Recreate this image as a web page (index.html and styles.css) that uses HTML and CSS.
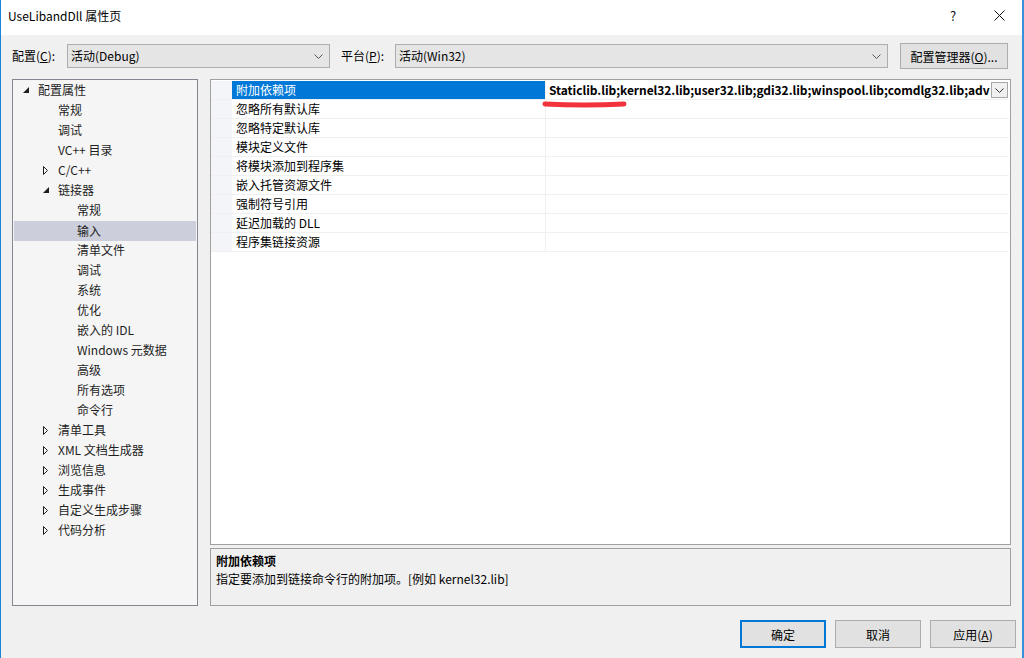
FILE: index.html
```html
<!DOCTYPE html>
<html lang="zh-CN">
<head>
<meta charset="utf-8">
<title>UseLibandDll 属性页</title>
<link rel="stylesheet" href="styles.css">
</head>
<body>
<div class="window">
  <div class="titlebar">
    <span class="title">UseLibandDll 属性页</span>
    <span class="help">?</span>
    <span class="close"><svg width="11" height="11" viewBox="0 0 11 11"><path d="M0.5 0.5 L10.5 10.5 M10.5 0.5 L0.5 10.5" stroke="#111" stroke-width="1" fill="none"/></svg></span>
  </div>

  <div class="config-row">
    <span class="lbl lbl-cfg">配置(<u>C</u>):</span>
    <div class="combo combo-cfg"><span>活动(Debug)</span><svg class="chev" width="9" height="5" viewBox="0 0 9 5"><path d="M0.5 0.5 L4.5 4.5 L8.5 0.5" stroke="#555" fill="none"/></svg></div>
    <span class="lbl lbl-plat">平台(<u>P</u>):</span>
    <div class="combo combo-plat"><span>活动(Win32)</span><svg class="chev" width="9" height="5" viewBox="0 0 9 5"><path d="M0.5 0.5 L4.5 4.5 L8.5 0.5" stroke="#555" fill="none"/></svg></div>
    <div class="btn btn-mgr">配置管理器(<u>O</u>)...</div>
  </div>

  <div class="main">
    <div class="tree">
      <div class="ti l0"><span class="arr"><svg width="6" height="6" viewBox="0 0 6 6"><path d="M6 0 L6 6 L0 6 Z" fill="#1e1e1e"/></svg></span>配置属性</div>
      <div class="ti l1"><span class="arr"></span>常规</div>
      <div class="ti l1"><span class="arr"></span>调试</div>
      <div class="ti l1"><span class="arr"></span>VC++ 目录</div>
      <div class="ti l1"><span class="arr"><svg width="5" height="9" viewBox="0 0 5 9"><path d="M0.5 0.5 L4.5 4.5 L0.5 8.5 Z" stroke="#1e1e1e" fill="none"/></svg></span>C/C++</div>
      <div class="ti l1"><span class="arr"><svg width="6" height="6" viewBox="0 0 6 6"><path d="M6 0 L6 6 L0 6 Z" fill="#1e1e1e"/></svg></span>链接器</div>
      <div class="ti l2"><span class="arr"></span>常规</div>
      <div class="ti l2 sel"><span class="arr"></span>输入</div>
      <div class="ti l2"><span class="arr"></span>清单文件</div>
      <div class="ti l2"><span class="arr"></span>调试</div>
      <div class="ti l2"><span class="arr"></span>系统</div>
      <div class="ti l2"><span class="arr"></span>优化</div>
      <div class="ti l2"><span class="arr"></span>嵌入的 IDL</div>
      <div class="ti l2"><span class="arr"></span>Windows 元数据</div>
      <div class="ti l2"><span class="arr"></span>高级</div>
      <div class="ti l2"><span class="arr"></span>所有选项</div>
      <div class="ti l2"><span class="arr"></span>命令行</div>
      <div class="ti l1"><span class="arr"><svg width="5" height="9" viewBox="0 0 5 9"><path d="M0.5 0.5 L4.5 4.5 L0.5 8.5 Z" stroke="#1e1e1e" fill="none"/></svg></span>清单工具</div>
      <div class="ti l1"><span class="arr"><svg width="5" height="9" viewBox="0 0 5 9"><path d="M0.5 0.5 L4.5 4.5 L0.5 8.5 Z" stroke="#1e1e1e" fill="none"/></svg></span>XML 文档生成器</div>
      <div class="ti l1"><span class="arr"><svg width="5" height="9" viewBox="0 0 5 9"><path d="M0.5 0.5 L4.5 4.5 L0.5 8.5 Z" stroke="#1e1e1e" fill="none"/></svg></span>浏览信息</div>
      <div class="ti l1"><span class="arr"><svg width="5" height="9" viewBox="0 0 5 9"><path d="M0.5 0.5 L4.5 4.5 L0.5 8.5 Z" stroke="#1e1e1e" fill="none"/></svg></span>生成事件</div>
      <div class="ti l1"><span class="arr"><svg width="5" height="9" viewBox="0 0 5 9"><path d="M0.5 0.5 L4.5 4.5 L0.5 8.5 Z" stroke="#1e1e1e" fill="none"/></svg></span>自定义生成步骤</div>
      <div class="ti l1"><span class="arr"><svg width="5" height="9" viewBox="0 0 5 9"><path d="M0.5 0.5 L4.5 4.5 L0.5 8.5 Z" stroke="#1e1e1e" fill="none"/></svg></span>代码分析</div>
    </div>

    <div class="right">
      <div class="grid-panel">
        <div class="grid">
          <div class="row selrow">
            <div class="gutter"></div>
            <div class="name">附加依赖项</div>
            <div class="value"><span class="vtext">Staticlib.lib;kernel32.lib;user32.lib;gdi32.lib;winspool.lib;comdlg32.lib;adv</span><span class="ddbtn"><svg width="9" height="5" viewBox="0 0 9 5"><path d="M0.5 0.5 L4.5 4.5 L8.5 0.5" stroke="#333" fill="none"/></svg></span></div>
          </div>
          <div class="row"><div class="gutter"></div><div class="name">忽略所有默认库</div><div class="value"></div></div>
          <div class="row"><div class="gutter"></div><div class="name">忽略特定默认库</div><div class="value"></div></div>
          <div class="row"><div class="gutter"></div><div class="name">模块定义文件</div><div class="value"></div></div>
          <div class="row"><div class="gutter"></div><div class="name">将模块添加到程序集</div><div class="value"></div></div>
          <div class="row"><div class="gutter"></div><div class="name">嵌入托管资源文件</div><div class="value"></div></div>
          <div class="row"><div class="gutter"></div><div class="name">强制符号引用</div><div class="value"></div></div>
          <div class="row"><div class="gutter"></div><div class="name">延迟加载的 DLL</div><div class="value"></div></div>
          <div class="row"><div class="gutter"></div><div class="name">程序集链接资源</div><div class="value"></div></div>
        </div>
        <svg class="redmark" width="86" height="9" viewBox="0 0 86 9"><path d="M3 5 C 25 6, 60 6, 82 5" stroke="#f2333c" stroke-width="5" stroke-linecap="round" fill="none"/></svg>
      </div>
      <div class="desc">
        <div class="desc-title">附加依赖项</div>
        <div class="desc-text">指定要添加到链接命令行的附加项。[例如 kernel32.lib]</div>
      </div>
    </div>
  </div>

  <div class="footer">
    <div class="btn fbtn default">确定</div>
    <div class="btn fbtn">取消</div>
    <div class="btn fbtn">应用(<u>A</u>)</div>
  </div>
</div>
</body>
</html>
```

FILE: styles.css
```css
* { box-sizing: border-box; }
html, body { margin: 0; padding: 0; }
body {
  font-family: "Noto Sans CJK SC", "Noto Sans", sans-serif;
  font-size: 12px;
  color: #000;
  background: #f0f0f0;
}
u { text-decoration: underline; text-underline-offset: 1px; }

.window {
  width: 1024px;
  height: 658px;
  background: #f0f0f0;
  border-left: 1px solid #1883d7;
  border-right: 2px solid #3a8fd9;
  display: flex;
  flex-direction: column;
  overflow: hidden;
}

.titlebar {
  height: 35px;
  background: #fff;
  display: flex;
  align-items: center;
  padding-left: 7px;
  padding-bottom: 4px;
  flex: none;
}
.title { flex: 1; line-height: 16px; }
.help { width: 46px; text-align: center; font-size: 13px; margin-left: 3px; color: #111; }
.close { width: 46px; display: flex; justify-content: center; }

.config-row {
  height: 44px;
  flex: none;
  display: flex;
  align-items: flex-start;
  padding-top: 9px;
  padding-left: 11px;
}
.lbl { line-height: 24px; }
.lbl-cfg { width: 55px; }
.lbl-plat { width: 54px; margin-left: 11px; }
.combo {
  height: 24px;
  background: #e5e5e5;
  border: 1px solid #adadad;
  display: flex;
  align-items: center;
  justify-content: space-between;
  padding: 0 6px 0 3px;
  line-height: 20px;
}
.combo-cfg { width: 263px; }
.combo-plat { width: 493px; }
.chev { flex: none; }
.btn {
  background: #e1e1e1;
  border: 1px solid #adadad;
  display: flex;
  align-items: center;
  justify-content: center;
}
.btn-mgr { width: 108px; height: 26px; margin-left: 12px; margin-top: -1px; }

.main {
  flex: none;
  display: flex;
  gap: 12px;
  padding-left: 11px;
}

.tree {
  width: 186px;
  height: 527px;
  background: #f5f5f5;
  border: 1px solid #828790;
  padding: 0 1px;
}
.ti {
  height: 20px;
  line-height: 20px;
  display: flex;
  align-items: center;
  color: #1e1e1e;
  white-space: nowrap;
}
.ti.l0 { padding-left: 9px; }
.ti.l1 { padding-left: 29px; }
.ti.l2 { padding-left: 48px; }
.ti.sel { background: #cccedb; margin-top: 1px; height: 20px; margin-bottom: -1px; }
.arr { width: 15px; flex: none; display: flex; align-items: center; }

.right {
  width: 801px;
  display: flex;
  flex-direction: column;
  gap: 3px;
}
.grid-panel {
  position: relative;
  height: 466px;
  background: #fff;
  border: 1px solid #a0a0a0;
  padding-top: 1px;
}
.grid {
  display: flex;
  flex-direction: column;
  width: 798px;
}
.row {
  display: flex;
  height: 19px;
  border-bottom: 1px solid #f0f0f0;
}
.gutter {
  width: 21px;
  flex: none;
  background: #f3f5f9;
}
.name {
  width: 314px;
  flex: none;
  padding-left: 4px;
  line-height: 18px;
  border-right: 1px solid #f0f0f0;
  white-space: nowrap;
}
.selrow .name { background: #0078d7; color: #fff; }
.value {
  flex: 1;
  min-width: 0;
  display: flex;
  align-items: center;
  padding-left: 3px;
  line-height: 18px;
}
.vtext {
  flex: 1;
  min-width: 0;
  overflow: hidden;
  white-space: nowrap;
  font-weight: bold;
  letter-spacing: -0.05px;
}
.ddbtn {
  width: 17px;
  height: 16px;
  flex: none;
  margin-right: 1px;
  border: 1px solid #a6a6a6;
  background: #f0f0f0;
  display: flex;
  align-items: center;
  justify-content: center;
}
.redmark {
  position: absolute;
  left: 331px;
  top: 19px;
}

.desc {
  height: 58px;
  border: 1px solid #a0a0a0;
  background: #f0f0f0;
  padding: 3px 5px;
  line-height: 18px;
}
.desc-title { font-weight: bold; }

.footer {
  flex: none;
  display: flex;
  justify-content: flex-end;
  gap: 9px;
  margin-top: 14px;
  padding-right: 6px;
}
.fbtn { width: 86px; height: 28px; }
.fbtn.default { border: 2px solid #0078d7; }
```
